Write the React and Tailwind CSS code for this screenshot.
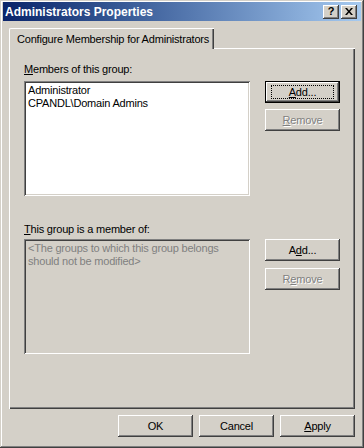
import React from 'react';

// Classic Windows 2000 bevels
const raised = "shadow-[inset_-1px_-1px_#404040,inset_1px_1px_#ffffff,inset_-2px_-2px_#808080,inset_2px_2px_#d4d0c8]";
const sunken = "shadow-[inset_1px_1px_#808080,inset_-1px_-1px_#ffffff,inset_2px_2px_#404040,inset_-2px_-2px_#d4d0c8]";

const WinButton = ({ children, disabled, isDefault, className = "" }) => (
    <button
        className={`h-[22px] w-[75px] bg-[#d4d0c8] text-[11px] leading-none ${
            isDefault ? "border border-black shadow-[inset_-1px_-1px_#404040,inset_1px_1px_#ffffff,inset_-2px_-2px_#808080]" : raised
        } ${disabled ? "text-[#808080] [text-shadow:1px_1px_#ffffff]" : "text-black"} flex items-center justify-center ${className}`}
    >
        {isDefault ? (
            <span className="flex items-center justify-center w-[63px] h-[14px] border border-dotted border-black">{children}</span>
        ) : (
            children
        )}
    </button>
);

const TitleButton = ({ children }) => (
    <div className={`w-[16px] h-[14px] bg-[#d4d0c8] ${raised} flex items-center justify-center text-[11px] font-bold text-black leading-none`}>
        {children}
    </div>
);

const App = () => {
    return (
        <div className="w-[364px] h-[448px] bg-[#d4d0c8] flex flex-col overflow-hidden shadow-[inset_-1px_-1px_#404040,inset_1px_1px_#d4d0c8,inset_-2px_-2px_#808080,inset_2px_2px_#ffffff]" style={{ fontFamily: '"Liberation Sans", Arial, sans-serif' }}>
            {/* Title bar */}
            <div className="mx-[3px] mt-[2px] h-[19px] bg-gradient-to-r from-[#0a246a] to-[#a6caf0] flex items-center justify-between pl-[2px] pr-[4px]">
                <span className="text-white font-bold text-[12px]">
                    Administrators Properties
                </span>
                <div className="flex gap-[2px]">
                    <TitleButton>?</TitleButton>
                    <TitleButton>
                        <svg width="8" height="7" viewBox="0 0 8 7">
                            <path d="M0 0h2l2 2.5L6 0h2L5 3.5 8 7H6L4 4.5 2 7H0l3-3.5z" fill="black" />
                        </svg>
                    </TitleButton>
                </div>
            </div>

            {/* Body */}
            <div className="flex flex-col px-[9px] pt-[7px] text-[11px] text-black tracking-[-0.2px]">
                {/* Tab header */}
                <div className="flex">
                    <div className="h-[21px] -mb-[1px] relative z-10 bg-[#d4d0c8] border-t border-l border-white shadow-[inset_-1px_0_#404040,inset_-2px_0_#808080] rounded-tl-[2px] pl-[7px] pr-[5px] flex items-center">
                        Configure Membership for Administrators
                    </div>
                </div>

                {/* Tab panel */}
                <div className="h-[361px] border-t border-l border-white shadow-[inset_-1px_-1px_#404040,inset_-2px_-2px_#808080] pl-[14px] pr-[15px] pt-[14px]">
                    <div className="h-[13px] leading-[13px]">
                        <span className="underline">M</span>embers of this group:
                    </div>
                    <div className="flex gap-[15px] mt-[5px]">
                        <div className={`w-[226px] h-[115px] bg-white ${sunken} px-[4px] pt-[3px] leading-[13px]`}>
                            <div>Administrator</div>
                            <div>CPANDL\Domain Admins</div>
                        </div>
                        <div className="flex flex-col gap-[6px]">
                            <WinButton isDefault>
                                <span><span className="underline">A</span>dd...</span>
                            </WinButton>
                            <WinButton disabled>
                                <span><span className="underline">R</span>emove</span>
                            </WinButton>
                        </div>
                    </div>

                    <div className="h-[13px] leading-[13px] mt-[27px]">
                        <span className="underline">T</span>his group is a member of:
                    </div>
                    <div className="flex gap-[15px] mt-[3px]">
                        <div className={`w-[226px] h-[115px] bg-[#d4d0c8] ${sunken} px-[4px] pt-[3px] leading-[13px] text-[#808080]`}>
                            <div>&lt;The groups to which this group belongs</div>
                            <div>should not be modified&gt;</div>
                        </div>
                        <div className="flex flex-col gap-[7px]">
                            <WinButton>
                                <span>A<span className="underline">d</span>d...</span>
                            </WinButton>
                            <WinButton disabled>
                                <span>R<span className="underline">e</span>move</span>
                            </WinButton>
                        </div>
                    </div>
                </div>

                {/* Bottom buttons */}
                <div className="flex justify-end gap-[6px] mt-[6px]">
                    <WinButton>OK</WinButton>
                    <WinButton>Cancel</WinButton>
                    <WinButton>
                        <span><span className="underline">A</span>pply</span>
                    </WinButton>
                </div>
            </div>
        </div>
    );
};

export default App;
